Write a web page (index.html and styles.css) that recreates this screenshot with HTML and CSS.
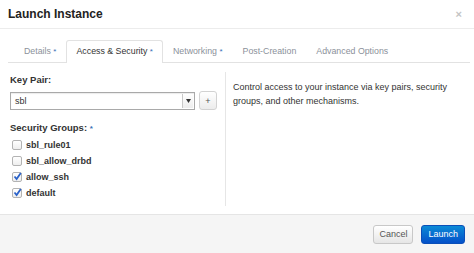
FILE: index.html
```html
<!DOCTYPE html>
<html lang="en">
<head>
    <meta charset="UTF-8">
    <title>Launch Instance</title>
    <link rel="stylesheet" href="styles.css">
</head>
<body>
    <div class="modal">
        <div class="modal-header">
            <h3>Launch Instance</h3>
            <span class="close">&times;</span>
        </div>

        <div class="modal-body">
            <ul class="tabs">
                <li>Details <span class="req">*</span></li>
                <li class="active">Access &amp; Security <span class="req">*</span></li>
                <li>Networking <span class="req">*</span></li>
                <li>Post-Creation</li>
                <li>Advanced Options</li>
            </ul>

            <div class="tab-content">
                <div class="left-col">
                    <label class="field-label">Key Pair:</label>
                    <div class="key-row">
                        <div class="select">
                            <span class="select-value">sbl</span>
                            <span class="select-arrow">
                                <svg width="5" height="4" viewBox="0 0 5 4"><path d="M0 0 H5 L2.5 4 Z" fill="#333"/></svg>
                            </span>
                        </div>
                        <button class="btn-small">+</button>
                    </div>

                    <label class="field-label groups-label">Security Groups: <span class="req">*</span></label>
                    <ul class="checks">
                        <li><span class="box"></span>sbl_rule01</li>
                        <li><span class="box"></span>sbl_allow_drbd</li>
                        <li><span class="box checked"><svg width="9" height="9" viewBox="0 0 9 9"><path d="M1.5 4.5 L3.6 7 L7.8 1" fill="none" stroke="#2a62c9" stroke-width="1.8"/></svg></span>allow_ssh</li>
                        <li><span class="box checked"><svg width="9" height="9" viewBox="0 0 9 9"><path d="M1.5 4.5 L3.6 7 L7.8 1" fill="none" stroke="#2a62c9" stroke-width="1.8"/></svg></span>default</li>
                    </ul>
                </div>
                <div class="right-col">
                    <p>Control access to your instance via key pairs, security groups, and other mechanisms.</p>
                </div>
            </div>
        </div>

        <div class="modal-footer">
            <button class="btn">Cancel</button>
            <button class="btn btn-primary">Launch</button>
        </div>
    </div>
</body>
</html>
```

FILE: styles.css
```css
body {
    margin: 0;
    font-family: "Liberation Sans", Arial, sans-serif;
    color: #333;
    background: #fff;
}

.modal {
    width: 474px;
    height: 253px;
    display: flex;
    flex-direction: column;
}

.modal-header {
    height: 28px;
    padding: 0 8px;
    display: flex;
    align-items: center;
    justify-content: space-between;
    border-bottom: 1px solid #ececec;
}

.modal-header h3 {
    margin: 0;
    font-size: 12px;
    font-weight: bold;
    color: #222;
}

.close {
    font-size: 11px;
    font-weight: bold;
    color: #c4c4c4;
    margin-right: 4px;
}

.modal-body {
    padding: 11px 4px 0 8px;
    flex: 1;
}

.tabs {
    list-style: none;
    margin: 0;
    padding: 0 0 0 6px;
    display: flex;
    border-bottom: 1px solid #e2e2e2;
    li {
        height: 21px;
        line-height: 21px;
        padding: 0 9px;
        font-size: 8.8px;
        color: #8b919a;
        border: 1px solid transparent;
        border-bottom: none;
        margin-bottom: -1px;
        border-radius: 3px 3px 0 0;
    }
    li.active {
        color: #333;
        background: #fff;
        border-color: #e2e2e2;
        height: 22px;
    }
}

.req {
    color: #3a6fb5;
    font-size: 8px;
}

.tab-content {
    display: flex;
    padding: 9px 0 0 2px;
}

.left-col {
    width: 215px;
    padding-bottom: 5px;
}

.right-col {
    border-left: 1px solid #e6e6e6;
    padding: 8px 0 0 7px;
    flex: 1;
    p {
        margin: 0;
        font-size: 9px;
        line-height: 14px;
        color: #333;
    }
}

.field-label {
    display: block;
    font-size: 9.5px;
    font-weight: bold;
    line-height: 16px;
    color: #333;
}

.key-row {
    display: flex;
    align-items: center;
    gap: 4px;
    margin-top: 3px;
}

.select {
    width: 183px;
    height: 16px;
    border: 1px solid #a9a9a9;
    box-shadow: inset 0 1px 1px rgba(0, 0, 0, 0.08);
    display: flex;
    align-items: center;
    justify-content: space-between;
    background: #fff;
}

.select-value {
    font-size: 9px;
    padding-left: 4px;
}

.select-arrow {
    width: 10px;
    height: 14px;
    margin-right: 1px;
    border-left: 1px solid #c8c8c8;
    background: linear-gradient(#fff, #ededed);
    display: flex;
    align-items: center;
    justify-content: center;
}

.btn-small {
    width: 18px;
    height: 19px;
    padding: 0;
    font-size: 9px;
    color: #555;
    border: 1px solid #d2d2d2;
    border-radius: 3px;
    background: linear-gradient(#fff, #ececec);
    font-family: inherit;
}

.groups-label {
    margin-top: 10px;
}

.checks {
    list-style: none;
    margin: 0;
    padding: 0 0 0 2px;
    li {
        height: 16px;
        display: flex;
        align-items: center;
        gap: 4px;
        font-size: 9px;
        font-weight: bold;
        color: #333;
    }
}

.box {
    width: 8px;
    height: 8px;
    border: 1px solid #b3b3b3;
    border-radius: 2px;
    background: linear-gradient(#fff, #eee);
    position: relative;
    svg {
        position: absolute;
        left: 0;
        top: -1px;
    }
}

.modal-footer {
    height: 38px;
    border-top: 1px solid #e5e5e5;
    background: #f5f5f5;
    display: flex;
    align-items: center;
    justify-content: flex-end;
    gap: 8px;
    padding: 0 9px;
}

.btn {
    height: 19px;
    padding: 0 5px;
    font-family: inherit;
    font-size: 9px;
    color: #555;
    border: 1px solid #c8c8c8;
    border-radius: 3px;
    background: linear-gradient(#fff, #e6e6e6);
}

.btn-primary {
    padding: 0 6px;
    color: #fff;
    border-color: #0a4fb8;
    background: linear-gradient(#0a8ad6, #0450c9);
}
```
